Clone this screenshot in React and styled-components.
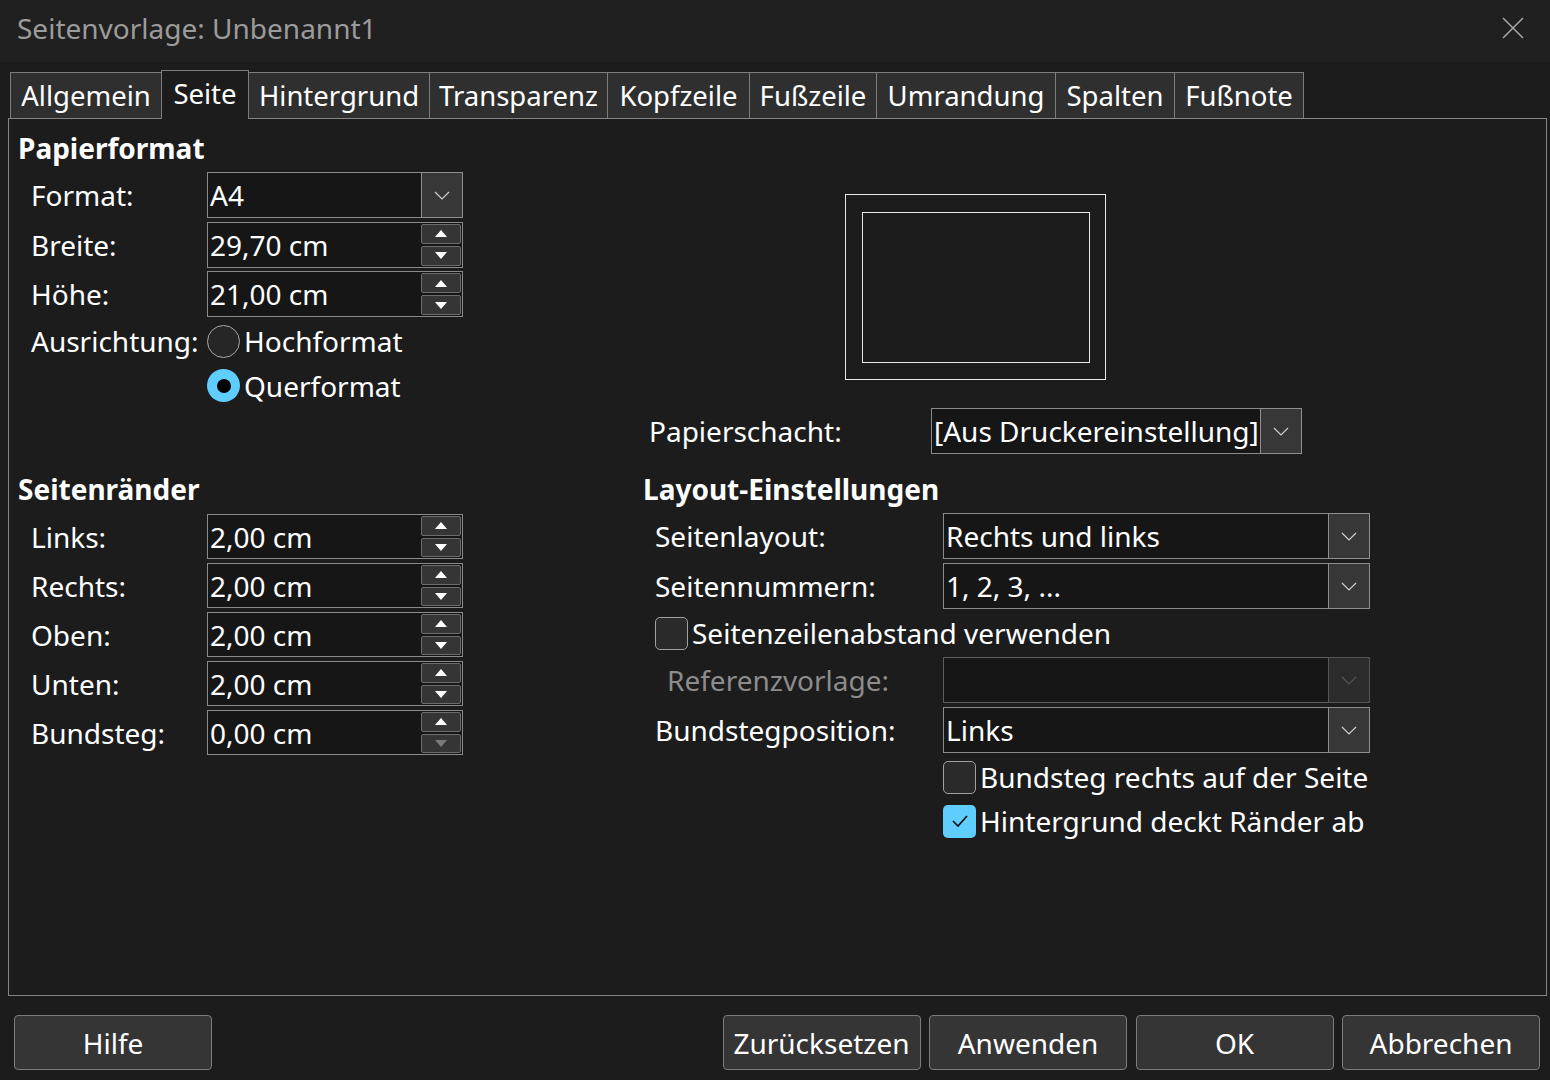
import React from 'react'
import styled, { createGlobalStyle } from 'styled-components'

const Global = createGlobalStyle`
html, body {
  margin: 0;
  background: #1c1c1c;
}
body {
  font-family: "Noto Sans", "Open Sans", sans-serif;
  color: #ffffff;
}
* { box-sizing: border-box; }
`

const Dialog = styled.div`
width: 1550px;
height: 1080px;
display: flex;
flex-direction: column;
background: #1c1c1c;
overflow: hidden;
`

const TitleBar = styled.div`
height: 62px;
flex: none;
background: #202020;
display: flex;
align-items: center;
justify-content: space-between;
padding: 0 26px 6px 17px;
`

const Title = styled.span`
font-size: 28px;
color: #9b9b9b;
`

const TabBar = styled.div`
height: 48px;
margin-top: 8px;
flex: none;
display: flex;
align-items: flex-end;
padding-left: 10px;
position: relative;
z-index: 1;
`

const Tab = styled.div`
width: ${({ $w }) => $w}px;
height: ${({ $active }) => ($active ? 49 : 46)}px;
margin-bottom: ${({ $active }) => ($active ? -1 : 0)}px;
margin-left: -1px;
border: 1px solid #7c7c7c;
border-bottom: none;
background: ${({ $active }) => ($active ? '#1c1c1c' : '#2f2f2f')};
font-size: 27.5px;
line-height: 46px;
text-align: center;
white-space: nowrap;
&:first-child { margin-left: 0; }
`

const Panel = styled.div`
height: 878px;
flex: none;
margin: 0 3px 0 8px;
border: 1px solid #858585;
padding: 10px 0 0 9px;
display: grid;
grid-template-columns: 625px auto;
align-content: start;
row-gap: 16px;
`

const Cell = styled.div`
display: flex;
flex-direction: column;
`

const PreviewCell = styled.div`
display: flex;
flex-direction: column;
align-items: center;
width: fit-content;
margin-left: 6px;
padding-top: 65px;
`

const Heading = styled.div`
font-size: 28px;
font-weight: 700;
line-height: 38px;
margin-bottom: ${({ $mb }) => $mb || 5}px;
`

const FormGrid = styled.div`
display: grid;
grid-template-columns: ${({ $cols }) => $cols};
row-gap: ${({ $gap }) => $gap}px;
align-items: center;
padding-left: ${({ $indent }) => $indent}px;
`

const Label = styled.span`
font-size: 28px;
color: ${({ $disabled }) => ($disabled ? '#8c8c8c' : '#ffffff')};
padding-left: ${({ $indent }) => $indent || 0}px;
width: ${({ $w }) => ($w ? `${$w}px` : 'auto')};
flex: none;
white-space: nowrap;
`

const Field = styled.div`
height: ${({ $h }) => $h || 46}px;
width: ${({ $w }) => ($w ? `${$w}px` : 'auto')};
display: flex;
border: 1px solid ${({ $disabled }) => ($disabled ? '#5e5e5e' : '#8a8a8a')};
background: #161616;
`

const Value = styled.div`
flex: 1;
padding-left: 2px;
font-size: 28px;
display: flex;
align-items: center;
white-space: nowrap;
overflow: hidden;
`

const DropBtn = styled.div`
width: 42px;
flex: none;
margin: -1px -1px -1px 0;
border: 1px solid ${({ $disabled }) => ($disabled ? '#555' : '#8f8f8f')};
background: ${({ $disabled }) => ($disabled ? '#2c2c2c' : '#373737')};
display: flex;
align-items: center;
justify-content: center;
`

const SpinCol = styled.div`
width: 41px;
flex: none;
display: flex;
flex-direction: column;
gap: 2px;
padding: 1px 1px 1px 0;
`

const SpinBtn = styled.div`
flex: 1;
background: #353535;
border: 1px solid #6c6c6c;
border-radius: 2px;
display: flex;
align-items: center;
justify-content: center;
`

const OptionRow = styled.div`
height: ${({ $h }) => $h}px;
display: flex;
align-items: center;
gap: 4px;
font-size: 28px;
white-space: nowrap;
grid-column: ${({ $span }) => ($span ? '1 / span 2' : 'auto')};
`

const Radio = styled.div`
width: 33px;
height: 33px;
border-radius: 50%;
flex: none;
border: ${({ $on }) => ($on ? 'none' : '1.5px solid #a8a8a8')};
background: ${({ $on }) => ($on ? '#60cdff' : '#262626')};
display: flex;
align-items: center;
justify-content: center;
&::after {
  content: '';
  display: ${({ $on }) => ($on ? 'block' : 'none')};
  width: 14px;
  height: 14px;
  border-radius: 50%;
  background: #000;
}
`

const Check = styled.div`
width: 33px;
height: 33px;
flex: none;
border-radius: 5px;
border: ${({ $on }) => ($on ? 'none' : '1.5px solid #a0a0a0')};
background: ${({ $on }) => ($on ? '#60cdff' : '#2a2a2a')};
display: flex;
align-items: center;
justify-content: center;
`

const Preview = styled.div`
width: 261px;
height: 186px;
border: 1.5px solid #e8e8e8;
display: flex;
align-items: center;
justify-content: center;
`

const PreviewInner = styled.div`
width: 228px;
height: 151px;
border: 1.5px solid #e8e8e8;
`

const SchachtRow = styled.div`
margin-top: 28px;
display: flex;
align-items: center;
`

const Footer = styled.div`
flex: 1;
display: flex;
padding: 19px 10px 0 14px;
gap: 8.5px;
`

const Spacer = styled.div`
flex: 1;
`

const Button = styled.div`
width: 198px;
height: 55px;
border: 1px solid #7c7c7c;
border-radius: 4px;
background: #353535;
font-size: 28px;
display: flex;
align-items: center;
justify-content: center;
`

const Chevron = ({ dim }) => (
  <svg width="16" height="9" viewBox="0 0 16 9">
    <polyline points="1,1 8,8 15,1" fill="none" stroke={dim ? '#555' : '#d0d0d0'} strokeWidth="1.2" />
  </svg>
)

const Tri = ({ down, dim }) => (
  <svg width="12" height="7" viewBox="0 0 12 7">
    <polygon points={down ? '0,0 12,0 6,7' : '0,7 12,7 6,0'} fill={dim ? '#7a7a7a' : '#ffffff'} />
  </svg>
)

const CheckMark = () => (
  <svg width="18" height="14" viewBox="0 0 18 14">
    <polyline points="2,7 7,12 16,2" fill="none" stroke="#0b0b0b" strokeWidth="1.6" />
  </svg>
)

const CloseIcon = () => (
  <svg width="22" height="22" viewBox="0 0 22 22">
    <path d="M1 1 L21 21 M21 1 L1 21" stroke="#a8a8a8" strokeWidth="1.5" />
  </svg>
)

const Dropdown = ({ value, w, disabled }) => (
  <Field $w={w} $disabled={disabled}>
    <Value>{value}</Value>
    <DropBtn $disabled={disabled}><Chevron dim={disabled} /></DropBtn>
  </Field>
)

const Spin = ({ value, h, downDisabled }) => (
  <Field $h={h}>
    <Value>{value}</Value>
    <SpinCol>
      <SpinBtn><Tri /></SpinBtn>
      <SpinBtn><Tri down dim={downDisabled} /></SpinBtn>
    </SpinCol>
  </Field>
)

const tabs = [
  ['Allgemein', 152],
  ['Seite', 88],
  ['Hintergrund', 182],
  ['Transparenz', 179],
  ['Kopfzeile', 143],
  ['Fußzeile', 128],
  ['Umrandung', 180],
  ['Spalten', 120],
  ['Fußnote', 130],
]

const margins = [
  ['Links:', '2,00 cm'],
  ['Rechts:', '2,00 cm'],
  ['Oben:', '2,00 cm'],
  ['Unten:', '2,00 cm'],
  ['Bundsteg:', '0,00 cm'],
]

const App = () => {
  return (
    <Dialog>
      <Global />
      <TitleBar>
        <Title>Seitenvorlage: Unbenannt1</Title>
        <CloseIcon />
      </TitleBar>
      <TabBar>
        {tabs.map(([name, w]) => (
          <Tab key={name} $w={w} $active={name === 'Seite'}>{name}</Tab>
        ))}
      </TabBar>
      <Panel>
        <Cell>
          <Heading>Papierformat</Heading>
          <FormGrid $cols="176px 256px" $gap={3.5} $indent={13}>
            <Label>Format:</Label>
            <Dropdown value="A4" />
            <Label>Breite:</Label>
            <Spin value="29,70 cm" />
            <Label>Höhe:</Label>
            <Spin value="21,00 cm" />
            <Label>Ausrichtung:</Label>
            <OptionRow $h={41}><Radio />Hochformat</OptionRow>
            <span />
            <OptionRow $h={41}><Radio $on />Querformat</OptionRow>
          </FormGrid>
        </Cell>
        <PreviewCell>
          <Preview><PreviewInner /></Preview>
          <SchachtRow>
            <Label $w={282}>Papierschacht:</Label>
            <Dropdown value="[Aus Druckereinstellung]" w={371} />
          </SchachtRow>
        </PreviewCell>
        <Cell>
          <Heading $mb={6}>Seitenränder</Heading>
          <FormGrid $cols="176px 256px" $gap={4} $indent={13}>
            {margins.map(([l, v]) => (
              <React.Fragment key={l}>
                <Label>{l}</Label>
                <Spin value={v} h={45} downDisabled={l === 'Bundsteg:'} />
              </React.Fragment>
            ))}
          </FormGrid>
        </Cell>
        <Cell>
          <Heading>Layout-Einstellungen</Heading>
          <FormGrid $cols="288px 427px" $gap={4} $indent={12}>
            <Label>Seitenlayout:</Label>
            <Dropdown value="Rechts und links" />
            <Label>Seitennummern:</Label>
            <Dropdown value="1, 2, 3, ..." />
            <OptionRow $h={40} $span><Check />Seitenzeilenabstand verwenden</OptionRow>
            <Label $disabled $indent={12}>Referenzvorlage:</Label>
            <Dropdown value="" disabled />
            <Label>Bundstegposition:</Label>
            <Dropdown value="Links" />
            <span />
            <OptionRow $h={40}><Check />Bundsteg rechts auf der Seite</OptionRow>
            <span />
            <OptionRow $h={40}><Check $on><CheckMark /></Check>Hintergrund deckt Ränder ab</OptionRow>
          </FormGrid>
        </Cell>
      </Panel>
      <Footer>
        <Button>Hilfe</Button>
        <Spacer />
        <Button>Zurücksetzen</Button>
        <Button>Anwenden</Button>
        <Button>OK</Button>
        <Button>Abbrechen</Button>
      </Footer>
    </Dialog>
  )
}

export default App
